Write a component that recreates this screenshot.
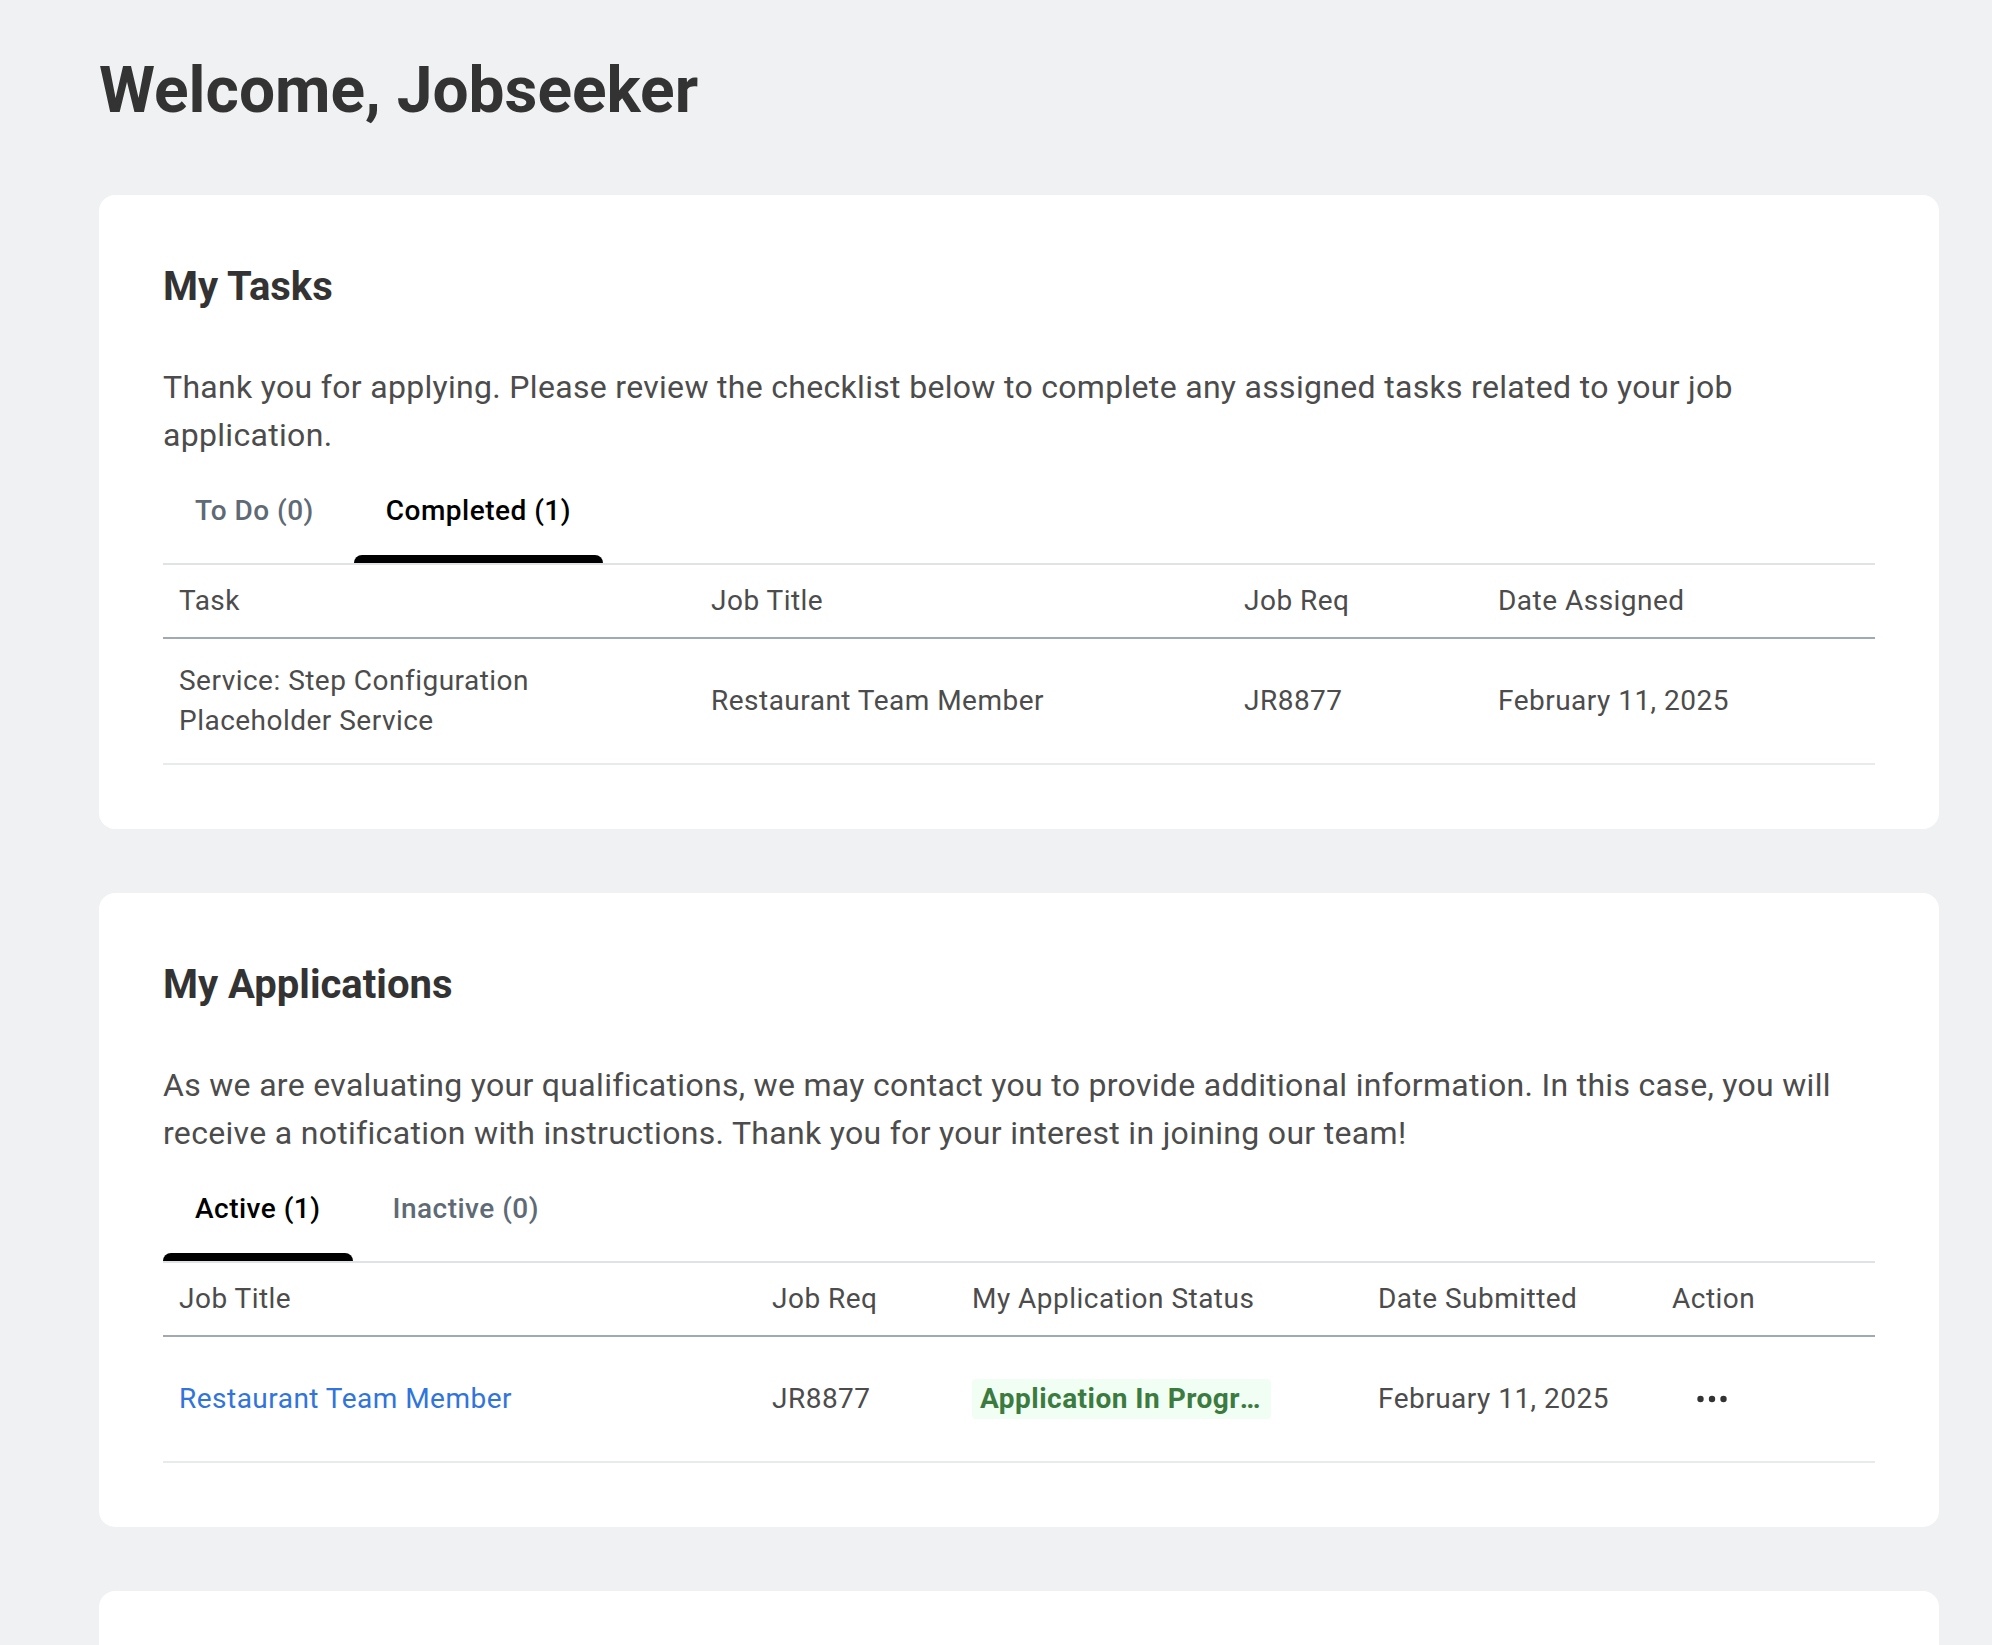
<script>
  let taskTab = "completed";
  let appTab = "active";
</script>

<main class="page">
  <h1>Welcome, Jobseeker</h1>

  <section class="card">
    <h2>My Tasks</h2>
    <p>Thank you for applying. Please review the checklist below to complete any assigned tasks related to your job application.</p>
    <div class="tabs">
      <button class="tab" class:active={taskTab === "todo"} on:click={() => (taskTab = "todo")}>To Do (0)</button>
      <button class="tab" class:active={taskTab === "completed"} on:click={() => (taskTab = "completed")}>Completed (1)</button>
    </div>
    <table class="tasks">
      <thead>
        <tr><th>Task</th><th>Job Title</th><th>Job Req</th><th>Date Assigned</th></tr>
      </thead>
      <tbody>
        <tr>
          <td>Service: Step Configuration<br />Placeholder Service</td>
          <td>Restaurant Team Member</td>
          <td>JR8877</td>
          <td>February 11, 2025</td>
        </tr>
      </tbody>
    </table>
  </section>

  <section class="card">
    <h2>My Applications</h2>
    <p>As we are evaluating your qualifications, we may contact you to provide additional information. In this case, you will receive a notification with instructions. Thank you for your interest in joining our team!</p>
    <div class="tabs">
      <button class="tab" class:active={appTab === "active"} on:click={() => (appTab = "active")}>Active (1)</button>
      <button class="tab" class:active={appTab === "inactive"} on:click={() => (appTab = "inactive")}>Inactive (0)</button>
    </div>
    <table class="apps">
      <thead>
        <tr><th>Job Title</th><th>Job Req</th><th>My Application Status</th><th>Date Submitted</th><th>Action</th></tr>
      </thead>
      <tbody>
        <tr>
          <td><a href="#job">Restaurant Team Member</a></td>
          <td>JR8877</td>
          <td><span class="status">Application In Progress</span></td>
          <td>February 11, 2025</td>
          <td>
            <button class="more" aria-label="More actions">
              <svg width="31" height="8" viewBox="0 0 31 8"><circle cx="4.5" cy="4" r="3.2" /><circle cx="16" cy="4" r="3.2" /><circle cx="27.5" cy="4" r="3.2" /></svg>
            </button>
          </td>
        </tr>
      </tbody>
    </table>
  </section>

  <section class="card empty"></section>
</main>

<style>
  :global(body) {
    background: #f0f1f2;
    overflow: hidden;
  }

  .page {
    height: 1645px;
    overflow: hidden;
    box-sizing: border-box;
    padding: 51px 53px 0 99px;
    font-family: Roboto, "Liberation Sans", sans-serif;
    color: #4c4c4c;
  }

  h1 {
    margin: 0 0 64px;
    font-size: 64px;
    line-height: 80px;
    font-weight: 700;
    color: #333333;
  }

  .card {
    background: #fff;
    border-radius: 16px;
    padding: 64px;
    margin-bottom: 64px;
  }

  .card.empty {
    height: 200px;
  }

  h2 {
    margin: 0 0 48px;
    font-size: 40px;
    line-height: 56px;
    font-weight: 700;
    color: #333333;
  }

  p {
    margin: 0;
    font-size: 32px;
    line-height: 48px;
    letter-spacing: 0.31px;
  }

  .tabs {
    display: flex;
    gap: 8px;
    height: 104px;
    border-bottom: 2px solid #dfe2e6;
  }

  .tab {
    position: relative;
    padding: 0 32px;
    height: 104px;
    border: 0;
    background: none;
    font: 500 28px/40px Roboto, sans-serif;
    letter-spacing: 0.48px;
    color: #5e6a75;
    cursor: pointer;
  }

  .tab.active {
    color: #000;
  }

  .tab.active::after {
    content: "";
    position: absolute;
    left: 0;
    right: 0;
    bottom: 0;
    height: 8px;
    background: #000;
    border-radius: 8px 8px 0 0;
  }

  table {
    width: 100%;
    border-collapse: collapse;
    table-layout: fixed;
    font-size: 28px;
    line-height: 40px;
    letter-spacing: 0.48px;
  }

  th,
  td {
    box-sizing: border-box;
    padding: 0 16px;
    text-align: left;
    font-weight: 400;
  }

  th {
    height: 73px;
    border-bottom: 2px solid #a1aab3;
  }

  td {
    height: 126px;
    border-bottom: 2px solid #e8ebed;
  }

  .tasks th:nth-child(1) { width: 532px; }
  .tasks th:nth-child(2) { width: 533px; }
  .tasks th:nth-child(3) { width: 254px; }

  .apps th:nth-child(1) { width: 593px; }
  .apps th:nth-child(2) { width: 200px; }
  .apps th:nth-child(3) { width: 406px; }
  .apps th:nth-child(4) { width: 294px; }

  a {
    color: #3074dc;
    text-decoration: none;
  }

  .status {
    display: block;
    box-sizing: border-box;
    width: 299px;
    padding: 0 8px;
    border-radius: 4px;
    background: #f1fef3;
    color: #3b7b3f;
    font-weight: 700;
    white-space: nowrap;
    overflow: hidden;
    text-overflow: ellipsis;
  }

  .more {
    display: flex;
    align-items: center;
    padding: 0;
    margin-left: 24px;
    border: 0;
    background: none;
    cursor: pointer;
  }

  .more circle {
    fill: #333333;
  }
</style>
